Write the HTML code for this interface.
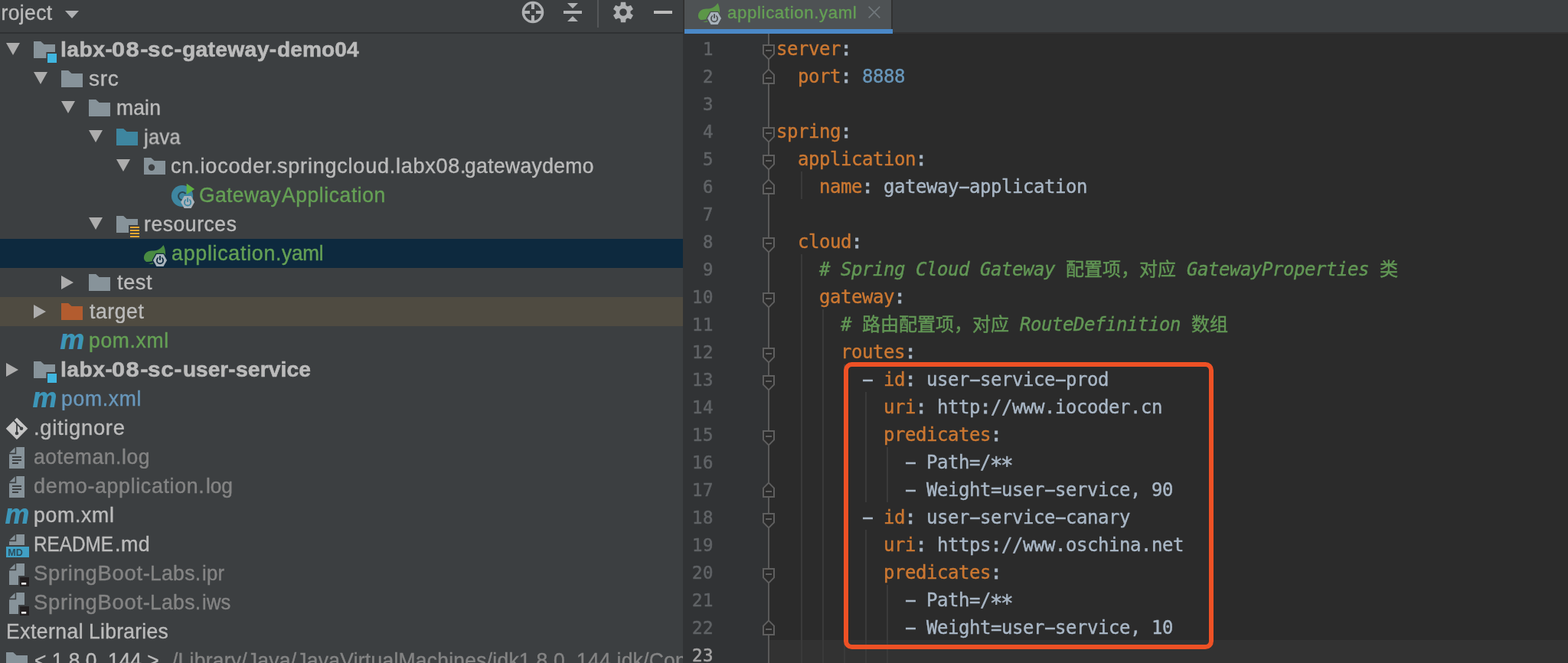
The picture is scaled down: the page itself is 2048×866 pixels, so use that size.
<!DOCTYPE html>
<html><head><meta charset="utf-8"><title>application.yaml</title>
<style>
html,body{margin:0;padding:0;}
html{overflow:hidden;width:2048px;height:866px;background:#2b2b2b;}
body{width:2048px;height:866px;overflow:hidden;position:relative;background:#2b2b2b;font-family:"Liberation Sans","Noto Sans CJK SC",sans-serif;}
#panel{position:absolute;left:0;top:0;width:892px;height:866px;background:#3c3f41;overflow:hidden;}
#phead{position:absolute;left:0;top:0;width:892px;height:42px;border-bottom:2px solid #2f3133;}
#ptitle{position:absolute;top:-2px;line-height:38px;font-size:26.5px;color:#bbbbbb;white-space:pre;will-change:transform;transform-origin:0 28px;-webkit-text-stroke:0.4px currentColor;}
#pP{display:inline-block;width:30px;text-align:right;margin-right:1.6px;letter-spacing:0;}
.row{position:absolute;left:0;width:892px;height:38px;overflow:visible;}
.row.sel{background:#0d293e;}
.row.exc{background:#4f4b41;}
.icw{position:absolute;top:0;height:38px;width:40px;}
.ic{position:absolute;left:0;top:0;overflow:visible;}
.lbl{position:absolute;top:0px;line-height:38px;height:38px;font-size:26.5px;color:#bbbbbb;white-space:pre;will-change:transform;-webkit-text-stroke:0.4px currentColor;}
.sg{display:inline-block;width:0;height:38px;vertical-align:top;transform-origin:0 28px;}
.sg.gr{color:#848484;}
.lbl.b{font-weight:bold;font-size:27.5px;-webkit-text-stroke:0.55px currentColor;}
.lbl.g{color:#65a055;}
.lbl.bl{color:#6897bb;}
.lbl.gr{color:#848484;}
svg{display:block;}
#tabs{position:absolute;left:892px;top:0;width:1156px;height:42px;background:#3c3f41;border-bottom:2px solid #323232;}
#tabsep{position:absolute;left:892px;top:0;width:2px;height:44px;background:#323232;}
#tab{position:absolute;left:894px;top:0;width:270px;height:38px;background:#4e5254;}
#tabr{position:absolute;left:1164px;top:0;width:2px;height:38px;background:#323232;}
#tabul{position:absolute;left:894px;top:38px;width:272px;height:6px;background:#4a88c7;}
#tabname{position:absolute;top:-2px;line-height:38px;font-size:22px;color:#65a055;white-space:pre;will-change:transform;transform-origin:0 27px;-webkit-text-stroke:0.35px currentColor;}
#gutter{position:absolute;left:892px;top:44px;width:111px;height:822px;background:#313335;}
#foldline{position:absolute;left:1003px;top:44px;width:2px;height:822px;background:#5a5a5a;}
#caret{position:absolute;left:1005px;top:836px;width:1043px;height:30px;background:#323232;}
.ln{position:absolute;left:892px;width:40.0px;text-align:right;height:36px;line-height:36px;margin-top:0px;font-family:"DejaVu Sans Mono","Liberation Mono",monospace;font-size:22.3px;letter-spacing:0.57px;color:#606366;white-space:pre;will-change:transform;-webkit-text-stroke:0.55px currentColor;}
.ln.cur{color:#a4a3a3;}
.code{position:absolute;height:36px;line-height:36px;font-family:"DejaVu Sans Mono","Liberation Mono",monospace;font-size:24px;letter-spacing:-0.45px;color:#a9b7c6;white-space:pre;will-change:transform;-webkit-text-stroke:0.4px currentColor;}
.k{color:#cc7832;}
.n{color:#6897bb;}
.c{color:#629755;font-style:italic;}
.cj{font-style:normal;letter-spacing:0;font-family:"Liberation Sans","Noto Sans CJK SC","WenQuanYi Zen Hei",sans-serif;font-size:24px;display:inline-block;width:24px;height:36px;line-height:36px;vertical-align:top;text-align:center;position:relative;top:0px;-webkit-text-stroke:0.45px currentColor;}
.cl{-webkit-text-stroke:1.0px currentColor;position:relative;top:-0.4px;}
.hy{display:inline-block;transform:scaleX(2.0);transform-origin:50% 50%;}
.as{display:inline-block;transform:translateY(4.3px) scale(1.18,1.22);transform-origin:50% 50%;}
.fold{position:absolute;left:996px;width:16px;height:20px;}
.guide{position:absolute;width:2px;background:#3a3a3a;}
#redbox{position:absolute;left:1101.8px;top:472.5px;width:470.9px;height:363.7px;border:6.3px solid #ee5125;border-radius:10.5px;}
</style></head>
<body>
<div id="panel">
<div id="phead"><div id="ptitle" style="left:-30.02px;letter-spacing:0.337px;transform:scale(1.0000,1.03)"><span id="pP">P</span>roject</div>
<svg style="position:absolute;left:85px;top:14px" width="18" height="10" viewBox="0 0 18 10"><path d="M0 0h18l-9 10z" fill="#afb1b3"/></svg><svg style="position:absolute;left:680px;top:0px" width="32" height="32" viewBox="0 0 32 32"><circle cx="16" cy="16" r="12.6" fill="none" stroke="#afb1b3" stroke-width="3.4"/><path d="M16 3v9M16 20v9M3 16h9M20 16h9" stroke="#afb1b3" stroke-width="4"/></svg><svg style="position:absolute;left:732px;top:0px" width="32" height="32" viewBox="0 0 32 32"><rect x="4" y="14" width="24" height="4" fill="#afb1b3"/><path d="M9 4h14l-7 7z M9 28h14l-7-7z" fill="#afb1b3"/></svg><div style="position:absolute;left:780px;top:0;width:2px;height:36px;background:#555759"></div><svg style="position:absolute;left:798px;top:0px" width="32" height="32" viewBox="-16 -16 32 32"><path d="M-3.1 -13.2h6.2l0.5 5h-7.2z" transform="rotate(0)" fill="#afb1b3"/><path d="M-3.1 -13.2h6.2l0.5 5h-7.2z" transform="rotate(60)" fill="#afb1b3"/><path d="M-3.1 -13.2h6.2l0.5 5h-7.2z" transform="rotate(120)" fill="#afb1b3"/><path d="M-3.1 -13.2h6.2l0.5 5h-7.2z" transform="rotate(180)" fill="#afb1b3"/><path d="M-3.1 -13.2h6.2l0.5 5h-7.2z" transform="rotate(240)" fill="#afb1b3"/><path d="M-3.1 -13.2h6.2l0.5 5h-7.2z" transform="rotate(300)" fill="#afb1b3"/><circle cx="0" cy="0" r="7.2" fill="none" stroke="#afb1b3" stroke-width="4.8"/></svg><div style="position:absolute;left:854px;top:14px;width:24px;height:4px;background:#bbbbbb"></div>
</div>
<div class="row " style="top:46px"><span class="icw" style="left:8px"><svg class="ic" width="40" height="40" viewBox="0 0 40 40" ><path d="M0 10h18l-9 16z" fill="#adadad"/></svg></span><span class="icw" style="left:44px"><svg class="ic" width="40" height="40" viewBox="0 0 40 40" ><path d="M0 8h9.2l4.4 4H28v10H16.4v8H0z" fill="#87939a"/><rect x="18" y="24" width="12" height="12" fill="#40b6e0"/></svg></span><span class="lbl b" style="left:79px"><span class="sg" style="margin-left:0px;letter-spacing:0.434px;transform:scale(1.0300,1.03)">labx-</span><span class="sg" style="margin-left:67px;letter-spacing:1.296px;transform:scale(1.1200,1.03)">08-</span><span class="sg" style="margin-left:47px;letter-spacing:0.773px;transform:scale(1.0773,1.03)">sc-</span><span class="sg" style="margin-left:45px;letter-spacing:0.259px;transform:scale(1.0300,1.03)">gateway-</span><span class="sg" style="margin-left:124px;letter-spacing:0.068px;transform:scale(1.0224,1.03)">demo04</span></span></div>
<div class="row " style="top:84px"><span class="icw" style="left:44px"><svg class="ic" width="40" height="40" viewBox="0 0 40 40" ><path d="M0 10h18l-9 16z" fill="#adadad"/></svg></span><span class="icw" style="left:80px"><svg class="ic" width="40" height="40" viewBox="0 0 40 40" ><path d="M0 8h9.2l4.4 4H28v18H0z" fill="#87939a"/></svg></span><span class="lbl " style="left:116px"><span class="sg" style="margin-left:0px;letter-spacing:0.585px;transform:scale(1.0603,1.03)">src</span></span></div>
<div class="row " style="top:122px"><span class="icw" style="left:80px"><svg class="ic" width="40" height="40" viewBox="0 0 40 40" ><path d="M0 10h18l-9 16z" fill="#adadad"/></svg></span><span class="icw" style="left:116px"><svg class="ic" width="40" height="40" viewBox="0 0 40 40" ><path d="M0 8h9.2l4.4 4H28v18H0z" fill="#87939a"/></svg></span><span class="lbl " style="left:152px"><span class="sg" style="margin-left:0px;letter-spacing:0.148px;transform:scale(1.0000,1.03)">main</span></span></div>
<div class="row " style="top:160px"><span class="icw" style="left:116px"><svg class="ic" width="40" height="40" viewBox="0 0 40 40" ><path d="M0 10h18l-9 16z" fill="#adadad"/></svg></span><span class="icw" style="left:152px"><svg class="ic" width="40" height="40" viewBox="0 0 40 40" ><path d="M0 8h9.2l4.4 4H28v18H0z" fill="#3e86a0"/></svg></span><span class="lbl " style="left:188px"><span class="sg" style="margin-left:0px;letter-spacing:0.308px;transform:scale(0.9629,1.03)">java</span></span></div>
<div class="row " style="top:198px"><span class="icw" style="left:152px"><svg class="ic" width="40" height="40" viewBox="0 0 40 40" ><path d="M0 10h18l-9 16z" fill="#adadad"/></svg></span><span class="icw" style="left:188px"><svg class="ic" width="40" height="40" viewBox="0 0 40 40" ><path d="M0 8h9.2l4.4 4H28v18H0z" fill="#87939a"/><circle cx="10" cy="20.8" r="4.2" fill="#3c3f41"/></svg></span><span class="lbl " style="left:223px"><span class="sg" style="margin-left:0px;letter-spacing:0.744px;transform:scale(1.0242,1.03)">cn.iocoder.</span><span class="sg" style="margin-left:139px;letter-spacing:0.735px;transform:scale(1.0220,1.03)">springcloud.</span><span class="sg" style="margin-left:155px;letter-spacing:0.660px;transform:scale(1.0223,1.03)">labx08.</span><span class="sg" style="margin-left:90px;letter-spacing:0.352px;transform:scale(1.0000,1.03)">gatewaydemo</span></span></div>
<div class="row " style="top:236px"><span class="icw" style="left:224px"><svg class="ic" width="40" height="40" viewBox="0 0 40 40" ><circle cx="14" cy="20" r="14.1" fill="#3e86a0"/><path d="M18.6 17a5.3 5.3 0 1 0 0.2 6.2" fill="none" stroke="#2a4652" stroke-width="2.1"/><path d="M19.7 3.8L30.1 11L19.7 18.1z" fill="#5fb142"/><polygon points="12.10,28.10 16.60,20.10 25.60,20.10 30.10,28.10 25.60,36.10 16.60,36.10" fill="#a8b3bb"/><circle cx="21.10" cy="28.40" r="4.1" fill="none" stroke="#3e86a0" stroke-width="1.8"/><rect x="19.00" y="21.90" width="4.2" height="4.2" fill="#a8b3bb"/><rect x="20.15" y="22.30" width="1.9" height="5.6" fill="#3e86a0"/></svg></span><span class="lbl g" style="left:260px"><span class="sg" style="margin-left:0px;letter-spacing:0.362px;transform:scale(1.0000,1.03)">Gateway</span><span class="sg" style="margin-left:108px;letter-spacing:0.569px;transform:scale(1.0000,1.03)">Application</span></span></div>
<div class="row " style="top:274px"><span class="icw" style="left:116px"><svg class="ic" width="40" height="40" viewBox="0 0 40 40" ><path d="M0 10h18l-9 16z" fill="#adadad"/></svg></span><span class="icw" style="left:152px"><svg class="ic" width="40" height="40" viewBox="0 0 40 40" ><path d="M0 8h9.2l4.4 4H28v8H16v10H0z" fill="#87939a"/><rect x="18" y="22" width="12" height="2" fill="#f0a732"/><rect x="18" y="26" width="12" height="2" fill="#f0a732"/><rect x="18" y="30" width="12" height="2" fill="#f0a732"/><rect x="18" y="34" width="12" height="2" fill="#f0a732"/></svg></span><span class="lbl " style="left:188px"><span class="sg" style="margin-left:0px;letter-spacing:0.569px;transform:scale(1.0000,1.03)">resources</span></span></div>
<div class="row sel" style="top:312px"><span class="icw" style="left:188px"><svg class="ic" width="40" height="40" viewBox="0 0 40 40" ><path transform="translate(0,8)" d="M25.5 0.1C26.8 3 28 6.5 28 10.5L28 14L12 22L10.5 20.9C8 21.8 5.5 22.3 3.1 22C0.8 20.5 -0.3 18.5 -0.1 16C0.2 12.5 2.5 9.5 5.9 8.2C9 7 12 7.6 15.1 7.2C18 6.8 20 5.5 22 4C23.5 2.8 24.6 1.6 25.5 0.1ZM5.4 24.6C7.5 24.4 10 23.8 12 23L12.3 24.4C10 25 7.5 25 5.4 24.6Z" fill="#498b42"/><polygon points="12.00,28.00 16.50,20.00 25.50,20.00 30.00,28.00 25.50,36.00 16.50,36.00" fill="#a8b3bb" stroke="#0d293e" stroke-width="2.6" stroke-linejoin="miter" paint-order="stroke"/><circle cx="21.00" cy="28.30" r="4.1" fill="none" stroke="#0d293e" stroke-width="1.8"/><rect x="18.90" y="21.80" width="4.2" height="4.2" fill="#a8b3bb"/><rect x="20.05" y="22.20" width="1.9" height="5.6" fill="#0d293e"/></svg></span><span class="lbl g" style="left:224px"><span class="sg" style="margin-left:0px;letter-spacing:0.704px;transform:scale(1.0123,1.03)">application.</span><span class="sg" style="margin-left:144px;letter-spacing:-0.140px;transform:scale(0.9831,1.03)">yaml</span></span></div>
<div class="row " style="top:350px"><span class="icw" style="left:80px"><svg class="ic" width="40" height="40" viewBox="0 0 40 40" ><path d="M0 10l16 9l-16 9z" fill="#adadad"/></svg></span><span class="icw" style="left:116px"><svg class="ic" width="40" height="40" viewBox="0 0 40 40" ><path d="M0 8h9.2l4.4 4H28v18H0z" fill="#87939a"/></svg></span><span class="lbl " style="left:153px"><span class="sg" style="margin-left:0px;letter-spacing:0.604px;transform:scale(1.0233,1.03)">test</span></span></div>
<div class="row exc" style="top:388px"><span class="icw" style="left:44px"><svg class="ic" width="40" height="40" viewBox="0 0 40 40" ><path d="M0 10l16 9l-16 9z" fill="#adadad"/></svg></span><span class="icw" style="left:80px"><svg class="ic" width="40" height="40" viewBox="0 0 40 40" ><path d="M0 8h9.2l4.4 4H28v18H0z" fill="#b35c2f"/></svg></span><span class="lbl " style="left:117px"><span class="sg" style="margin-left:0px;letter-spacing:0.602px;transform:scale(1.0008,1.03)">target</span></span></div>
<div class="row " style="top:426px"><span class="icw" style="left:80px"><svg class="ic" width="40" height="40" viewBox="0 0 40 40" style="overflow:visible"><text x="-2.1" y="30" font-family="'DejaVu Sans','Liberation Sans',sans-serif" font-weight="bold" font-style="italic" font-size="36" fill="#3d96b8" textLength="32.9" lengthAdjust="spacingAndGlyphs">m</text></svg></span><span class="lbl g" style="left:116px"><span class="sg" style="margin-left:0px;letter-spacing:0.668px;transform:scale(1.0000,1.03)">pom.xml</span></span></div>
<div class="row " style="top:464px"><span class="icw" style="left:8px"><svg class="ic" width="40" height="40" viewBox="0 0 40 40" ><path d="M0 10l16 9l-16 9z" fill="#adadad"/></svg></span><span class="icw" style="left:44px"><svg class="ic" width="40" height="40" viewBox="0 0 40 40" ><path d="M0 8h9.2l4.4 4H28v10H16.4v8H0z" fill="#87939a"/><rect x="18" y="24" width="12" height="12" fill="#40b6e0"/></svg></span><span class="lbl b" style="left:79px"><span class="sg" style="margin-left:0px;letter-spacing:0.434px;transform:scale(1.0300,1.03)">labx-</span><span class="sg" style="margin-left:67px;letter-spacing:1.296px;transform:scale(1.1200,1.03)">08-</span><span class="sg" style="margin-left:47px;letter-spacing:0.773px;transform:scale(1.0773,1.03)">sc-</span><span class="sg" style="margin-left:46px;letter-spacing:0.003px;transform:scale(1.0177,1.03)">user-</span><span class="sg" style="margin-left:69px;letter-spacing:0.076px;transform:scale(1.0300,1.03)">service</span></span></div>
<div class="row " style="top:502px"><span class="icw" style="left:44px"><svg class="ic" width="40" height="40" viewBox="0 0 40 40" style="overflow:visible"><text x="-2.1" y="30" font-family="'DejaVu Sans','Liberation Sans',sans-serif" font-weight="bold" font-style="italic" font-size="36" fill="#3d96b8" textLength="32.9" lengthAdjust="spacingAndGlyphs">m</text></svg></span><span class="lbl bl" style="left:80px"><span class="sg" style="margin-left:0px;letter-spacing:0.688px;transform:scale(1.0008,1.03)">pom.xml</span></span></div>
<div class="row " style="top:540px"><span class="icw" style="left:8px"><svg class="ic" width="40" height="40" viewBox="0 0 40 40" ><path d="M14 5.9l13.9 13.9l-13.9 13.9l-13.9-13.9z" fill="#c6c6c6" stroke="#c6c6c6" stroke-width="0.8" stroke-linejoin="round"/><path d="M9.2 8.6l4.8 4.8v12.4M14 13.6l6 6" stroke="#3c3f41" stroke-width="1.8" fill="none"/><circle cx="14" cy="26" r="2.3" fill="#3c3f41"/><circle cx="20" cy="19.8" r="2.3" fill="#3c3f41"/></svg></span><span class="lbl " style="left:44px"><span class="sg" style="margin-left:0px;letter-spacing:0.660px;transform:scale(1.0342,1.03)">.gitignore</span></span></div>
<div class="row " style="top:578px"><span class="icw" style="left:8px"><svg class="ic" width="40" height="40" viewBox="0 0 40 40" ><path d="M13.2 6H24v28H4V15.2h9.2z" fill="#87939a"/><path d="M4.4 13.6l7.2-7.2v7.2z" fill="#87939a"/><rect x="8" y="18" width="12" height="2" fill="#3c3f41"/><rect x="8" y="22" width="12" height="2" fill="#3c3f41"/><rect x="8" y="26" width="8" height="2" fill="#3c3f41"/></svg></span><span class="lbl gr" style="left:44px"><span class="sg" style="margin-left:0px;letter-spacing:0.563px;transform:scale(1.0000,1.03)">aoteman.log</span></span></div>
<div class="row " style="top:616px"><span class="icw" style="left:8px"><svg class="ic" width="40" height="40" viewBox="0 0 40 40" ><path d="M13.2 6H24v28H4V15.2h9.2z" fill="#87939a"/><path d="M4.4 13.6l7.2-7.2v7.2z" fill="#87939a"/><rect x="8" y="18" width="12" height="2" fill="#3c3f41"/><rect x="8" y="22" width="12" height="2" fill="#3c3f41"/><rect x="8" y="26" width="8" height="2" fill="#3c3f41"/></svg></span><span class="lbl gr" style="left:44px"><span class="sg" style="margin-left:0px;letter-spacing:0.722px;transform:scale(1.0191,1.03)">demo-</span><span class="sg" style="margin-left:80px;letter-spacing:0.659px;transform:scale(1.0094,1.03)">application.</span><span class="sg" style="margin-left:145px;letter-spacing:-0.106px;transform:scale(0.9959,1.03)">log</span></span></div>
<div class="row " style="top:654px"><span class="icw" style="left:8px"><svg class="ic" width="40" height="40" viewBox="0 0 40 40" style="overflow:visible"><text x="-2.1" y="30" font-family="'DejaVu Sans','Liberation Sans',sans-serif" font-weight="bold" font-style="italic" font-size="36" fill="#3d96b8" textLength="32.9" lengthAdjust="spacingAndGlyphs">m</text></svg></span><span class="lbl " style="left:44px"><span class="sg" style="margin-left:0px;letter-spacing:0.720px;transform:scale(1.0037,1.03)">pom.xml</span></span></div>
<div class="row " style="top:692px"><span class="icw" style="left:8px"><svg class="ic" width="40" height="40" viewBox="0 0 40 40" ><path d="M13.2 6H24v14H4V15.2h9.2z" fill="#87939a"/><path d="M4.4 13.6l7.2-7.2v7.2z" fill="#87939a"/><rect x="0" y="22" width="30" height="14" fill="#40a0c5"/><text x="2.2" y="33.6" font-family="'Liberation Sans',sans-serif" font-weight="bold" font-size="12.5" fill="#2c4d5c" textLength="19.6" lengthAdjust="spacingAndGlyphs">MD</text></svg></span><span class="lbl " style="left:44px"><span class="sg" style="margin-left:0px;letter-spacing:-0.075px;transform:scale(0.9193,1.03)">README</span><span class="sg" style="margin-left:106px;letter-spacing:0.487px;transform:scale(1.0151,1.03)">.md</span></span></div>
<div class="row " style="top:730px"><span class="icw" style="left:8px"><svg class="ic" width="40" height="40" viewBox="0 0 40 40" ><path d="M13.2 6H24v16h-8v12H4V15.2h9.2z" fill="#87939a"/><path d="M4.4 13.6l7.2-7.2v7.2z" fill="#87939a"/><rect x="18" y="24" width="12" height="12" fill="#231f20"/><rect x="20" y="31" width="6.2" height="2.6" fill="#ffffff"/></svg></span><span class="lbl gr" style="left:44px"><span class="sg" style="margin-left:0px;letter-spacing:0.696px;transform:scale(1.0344,1.03)">SpringBoot-</span><span class="sg" style="margin-left:152px;letter-spacing:0.315px;transform:scale(1.0000,1.03)">Labs.</span><span class="sg" style="margin-left:68px;letter-spacing:0.224px;transform:scale(0.9710,1.03)">ipr</span></span></div>
<div class="row " style="top:768px"><span class="icw" style="left:8px"><svg class="ic" width="40" height="40" viewBox="0 0 40 40" ><path d="M13.2 6H24v16h-8v12H4V15.2h9.2z" fill="#87939a"/><path d="M4.4 13.6l7.2-7.2v7.2z" fill="#87939a"/><rect x="18" y="24" width="12" height="12" fill="#231f20"/><rect x="20" y="31" width="6.2" height="2.6" fill="#ffffff"/></svg></span><span class="lbl gr" style="left:44px"><span class="sg" style="margin-left:0px;letter-spacing:0.696px;transform:scale(1.0344,1.03)">SpringBoot-</span><span class="sg" style="margin-left:152px;letter-spacing:0.315px;transform:scale(1.0000,1.03)">Labs.</span><span class="sg" style="margin-left:68px;letter-spacing:0.229px;transform:scale(0.9657,1.03)">iws</span></span></div>
<div class="row " style="top:806px"><span class="lbl " style="left:8px"><span class="sg" style="margin-left:0px;letter-spacing:0.487px;transform:scale(1.0000,1.03)">External </span><span class="sg" style="margin-left:108px;letter-spacing:0.261px;transform:scale(1.0000,1.03)">Libraries</span></span></div>
<div class="row " style="top:844px"><span class="icw" style="left:8px"><svg class="ic" width="40" height="40" viewBox="0 0 40 40" ><path d="M0 8h9.2l4.4 4H28v18H0z" fill="#87939a"/></svg></span><span class="lbl " style="left:45px"><span class="sg" style="margin-left:0px;letter-spacing:0.019px;transform:scale(0.9935,1.03)">&lt; 1.8.0_144 &gt; </span><span class="sg gr" style="margin-left:180px;letter-spacing:0.233px;transform:scale(1.0000,1.03)">/Library/Java/JavaVirtualMachines/jdk1.8.0_144.jdk/Contents/Home</span></span></div>
</div>
<div id="tabs"></div>
<div id="tabsep"></div>
<div id="tab"><svg style="position:absolute;left:18px;top:0;overflow:visible" width="40" height="40" viewBox="0 0 40 40" ><path transform="translate(0,4)" d="M25.5 0.1C26.8 3 28 6.5 28 10.5L28 14L12 22L10.5 20.9C8 21.8 5.5 22.3 3.1 22C0.8 20.5 -0.3 18.5 -0.1 16C0.2 12.5 2.5 9.5 5.9 8.2C9 7 12 7.6 15.1 7.2C18 6.8 20 5.5 22 4C23.5 2.8 24.6 1.6 25.5 0.1ZM5.4 24.6C7.5 24.4 10 23.8 12 23L12.3 24.4C10 25 7.5 25 5.4 24.6Z" fill="#5c9748"/><polygon points="12.00,24.00 16.50,16.00 25.50,16.00 30.00,24.00 25.50,32.00 16.50,32.00" fill="#a8b3bb" stroke="#4e5254" stroke-width="2.6" stroke-linejoin="miter" paint-order="stroke"/><circle cx="21.00" cy="24.30" r="4.1" fill="none" stroke="#4e5254" stroke-width="1.8"/><rect x="18.90" y="17.80" width="4.2" height="4.2" fill="#a8b3bb"/><rect x="20.05" y="18.20" width="1.9" height="5.6" fill="#4e5254"/></svg><div id="tabname" style="left:56.00px;letter-spacing:0.685px;transform:scaleX(1.0045)">application.yaml</div>
<svg style="position:absolute;left:239px;top:7px" width="18" height="18" viewBox="0 0 18 18"><path d="M1.6 1.6l14.6 14.8M16.2 1.6l-14.6 14.8" stroke="#70777b" stroke-width="1.7" fill="none"/></svg>
</div>
<div id="tabr"></div>
<div id="tabul"></div>
<div id="gutter"></div>
<div id="caret"></div>
<div class="guide" style="left:1046px;top:224px;height:36px"></div>
<div class="guide" style="left:1046px;top:332px;height:534px"></div>
<div class="guide" style="left:1074px;top:404px;height:462px"></div>
<div class="guide" style="left:1102px;top:476px;height:390px"></div>
<div class="guide" style="left:1130px;top:512px;height:144px"></div>
<div class="guide" style="left:1158px;top:584px;height:72px"></div>
<div class="guide" style="left:1130px;top:692px;height:174px"></div>
<div class="guide" style="left:1158px;top:764px;height:102px"></div>
<div id="foldline"></div>
<div class="ln" style="top:46px">1</div>
<div class="code" style="top:46px;left:1014px"><span class="k">server</span><span class="cl">:</span></div>
<div class="fold" style="top:58px"><svg width="16" height="20" viewBox="0 0 16 20" style="overflow:visible"><path d="M1 1h14v11.4l-7 7l-7-7z" fill="#2b2b2b" stroke="#5f5f5f" stroke-width="2" stroke-linejoin="miter"/><rect x="4" y="7" width="8" height="2" fill="#5f5f5f"/></svg></div>
<div class="ln" style="top:82px">2</div>
<div class="code" style="top:82px;left:1042px"><span class="k">port</span><span class="cl">:</span> <span class="n">8888</span></div>
<div class="fold" style="top:90px"><svg width="16" height="20" viewBox="0 0 16 20" style="overflow:visible"><path d="M1 19h14v-11.4l-7-7l-7 7z" fill="#2b2b2b" stroke="#5f5f5f" stroke-width="2" stroke-linejoin="miter"/><rect x="4" y="11" width="8" height="2" fill="#5f5f5f"/></svg></div>
<div class="ln" style="top:118px">3</div>
<div class="ln" style="top:154px">4</div>
<div class="code" style="top:154px;left:1014px"><span class="k">spring</span><span class="cl">:</span></div>
<div class="fold" style="top:166px"><svg width="16" height="20" viewBox="0 0 16 20" style="overflow:visible"><path d="M1 1h14v11.4l-7 7l-7-7z" fill="#2b2b2b" stroke="#5f5f5f" stroke-width="2" stroke-linejoin="miter"/><rect x="4" y="7" width="8" height="2" fill="#5f5f5f"/></svg></div>
<div class="ln" style="top:190px">5</div>
<div class="code" style="top:190px;left:1042px"><span class="k">application</span><span class="cl">:</span></div>
<div class="fold" style="top:202px"><svg width="16" height="20" viewBox="0 0 16 20" style="overflow:visible"><path d="M1 1h14v11.4l-7 7l-7-7z" fill="#2b2b2b" stroke="#5f5f5f" stroke-width="2" stroke-linejoin="miter"/><rect x="4" y="7" width="8" height="2" fill="#5f5f5f"/></svg></div>
<div class="ln" style="top:226px">6</div>
<div class="code" style="top:226px;left:1070px"><span class="k">name</span><span class="cl">:</span> gateway<span class="hy">-</span>application</div>
<div class="fold" style="top:234px"><svg width="16" height="20" viewBox="0 0 16 20" style="overflow:visible"><path d="M1 19h14v-11.4l-7-7l-7 7z" fill="#2b2b2b" stroke="#5f5f5f" stroke-width="2" stroke-linejoin="miter"/><rect x="4" y="11" width="8" height="2" fill="#5f5f5f"/></svg></div>
<div class="ln" style="top:262px">7</div>
<div class="ln" style="top:298px">8</div>
<div class="code" style="top:298px;left:1042px"><span class="k">cloud</span><span class="cl">:</span></div>
<div class="fold" style="top:310px"><svg width="16" height="20" viewBox="0 0 16 20" style="overflow:visible"><path d="M1 1h14v11.4l-7 7l-7-7z" fill="#2b2b2b" stroke="#5f5f5f" stroke-width="2" stroke-linejoin="miter"/><rect x="4" y="7" width="8" height="2" fill="#5f5f5f"/></svg></div>
<div class="ln" style="top:334px">9</div>
<div class="code" style="top:334px;left:1070px"><span class="c"># Spring Cloud Gateway <span class="cj">配</span><span class="cj">置</span><span class="cj">项</span><span class="cj">，</span><span class="cj">对</span><span class="cj">应</span> GatewayProperties <span class="cj">类</span></span></div>
<div class="ln" style="top:370px">10</div>
<div class="code" style="top:370px;left:1070px"><span class="k">gateway</span><span class="cl">:</span></div>
<div class="fold" style="top:382px"><svg width="16" height="20" viewBox="0 0 16 20" style="overflow:visible"><path d="M1 1h14v11.4l-7 7l-7-7z" fill="#2b2b2b" stroke="#5f5f5f" stroke-width="2" stroke-linejoin="miter"/><rect x="4" y="7" width="8" height="2" fill="#5f5f5f"/></svg></div>
<div class="ln" style="top:406px">11</div>
<div class="code" style="top:406px;left:1098px"><span class="c"># <span class="cj">路</span><span class="cj">由</span><span class="cj">配</span><span class="cj">置</span><span class="cj">项</span><span class="cj">，</span><span class="cj">对</span><span class="cj">应</span> RouteDefinition <span class="cj">数</span><span class="cj">组</span></span></div>
<div class="ln" style="top:442px">12</div>
<div class="code" style="top:442px;left:1098px"><span class="k">routes</span><span class="cl">:</span></div>
<div class="fold" style="top:454px"><svg width="16" height="20" viewBox="0 0 16 20" style="overflow:visible"><path d="M1 1h14v11.4l-7 7l-7-7z" fill="#2b2b2b" stroke="#5f5f5f" stroke-width="2" stroke-linejoin="miter"/><rect x="4" y="7" width="8" height="2" fill="#5f5f5f"/></svg></div>
<div class="ln" style="top:478px">13</div>
<div class="code" style="top:478px;left:1126px"><span class="hy">-</span> <span class="k">id</span><span class="cl">:</span> user<span class="hy">-</span>service<span class="hy">-</span>prod</div>
<div class="fold" style="top:490px"><svg width="16" height="20" viewBox="0 0 16 20" style="overflow:visible"><path d="M1 1h14v11.4l-7 7l-7-7z" fill="#2b2b2b" stroke="#5f5f5f" stroke-width="2" stroke-linejoin="miter"/><rect x="4" y="7" width="8" height="2" fill="#5f5f5f"/></svg></div>
<div class="ln" style="top:514px">14</div>
<div class="code" style="top:514px;left:1154px"><span class="k">uri</span><span class="cl">:</span> http<span class="cl">:</span>//www.iocoder.cn</div>
<div class="ln" style="top:550px">15</div>
<div class="code" style="top:550px;left:1154px"><span class="k">predicates</span><span class="cl">:</span></div>
<div class="fold" style="top:562px"><svg width="16" height="20" viewBox="0 0 16 20" style="overflow:visible"><path d="M1 1h14v11.4l-7 7l-7-7z" fill="#2b2b2b" stroke="#5f5f5f" stroke-width="2" stroke-linejoin="miter"/><rect x="4" y="7" width="8" height="2" fill="#5f5f5f"/></svg></div>
<div class="ln" style="top:586px">16</div>
<div class="code" style="top:586px;left:1182px"><span class="hy">-</span> Path=/<span class="as">*</span><span class="as">*</span></div>
<div class="ln" style="top:622px">17</div>
<div class="code" style="top:622px;left:1182px"><span class="hy">-</span> Weight=user<span class="hy">-</span>service, 90</div>
<div class="fold" style="top:630px"><svg width="16" height="20" viewBox="0 0 16 20" style="overflow:visible"><path d="M1 19h14v-11.4l-7-7l-7 7z" fill="#2b2b2b" stroke="#5f5f5f" stroke-width="2" stroke-linejoin="miter"/><rect x="4" y="11" width="8" height="2" fill="#5f5f5f"/></svg></div>
<div class="ln" style="top:658px">18</div>
<div class="code" style="top:658px;left:1126px"><span class="hy">-</span> <span class="k">id</span><span class="cl">:</span> user<span class="hy">-</span>service<span class="hy">-</span>canary</div>
<div class="fold" style="top:670px"><svg width="16" height="20" viewBox="0 0 16 20" style="overflow:visible"><path d="M1 1h14v11.4l-7 7l-7-7z" fill="#2b2b2b" stroke="#5f5f5f" stroke-width="2" stroke-linejoin="miter"/><rect x="4" y="7" width="8" height="2" fill="#5f5f5f"/></svg></div>
<div class="ln" style="top:694px">19</div>
<div class="code" style="top:694px;left:1154px"><span class="k">uri</span><span class="cl">:</span> https<span class="cl">:</span>//www.oschina.net</div>
<div class="ln" style="top:730px">20</div>
<div class="code" style="top:730px;left:1154px"><span class="k">predicates</span><span class="cl">:</span></div>
<div class="fold" style="top:742px"><svg width="16" height="20" viewBox="0 0 16 20" style="overflow:visible"><path d="M1 1h14v11.4l-7 7l-7-7z" fill="#2b2b2b" stroke="#5f5f5f" stroke-width="2" stroke-linejoin="miter"/><rect x="4" y="7" width="8" height="2" fill="#5f5f5f"/></svg></div>
<div class="ln" style="top:766px">21</div>
<div class="code" style="top:766px;left:1182px"><span class="hy">-</span> Path=/<span class="as">*</span><span class="as">*</span></div>
<div class="ln" style="top:802px">22</div>
<div class="code" style="top:802px;left:1182px"><span class="hy">-</span> Weight=user<span class="hy">-</span>service, 10</div>
<div class="fold" style="top:810px"><svg width="16" height="20" viewBox="0 0 16 20" style="overflow:visible"><path d="M1 19h14v-11.4l-7-7l-7 7z" fill="#2b2b2b" stroke="#5f5f5f" stroke-width="2" stroke-linejoin="miter"/><rect x="4" y="11" width="8" height="2" fill="#5f5f5f"/></svg></div>
<div class="ln cur" style="top:838px">23</div>
<div id="redbox"></div>
</body></html>
